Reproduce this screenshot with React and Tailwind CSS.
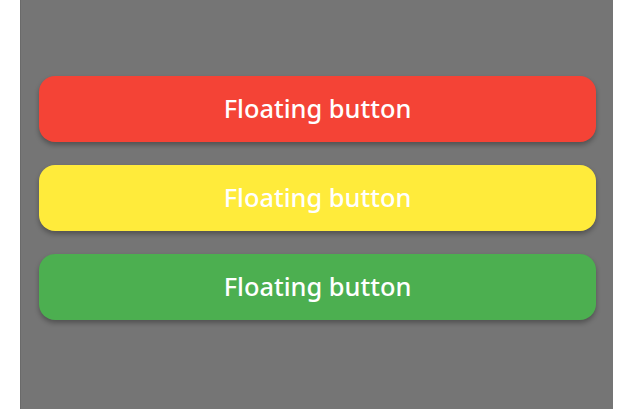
export default function App() {
  const buttons = [
    { label: "Floating button", color: "bg-[#f44336]" },
    { label: "Floating button", color: "bg-[#ffeb3b]" },
    { label: "Floating button", color: "bg-[#4caf50]" },
  ];
  return (
    <div className="w-[640px] h-[409px] bg-white flex">
      <div className="ml-[20px] w-[593px] h-full bg-[#757575] border-l border-[#6a6a6a] pl-[18px] pr-[17px] pt-[76px] flex flex-col gap-[23px]">
        {buttons.map((b, i) => (
          <button
            key={i}
            className={`${b.color} h-[66px] w-full rounded-[16px] shadow-[0_3px_5px_rgba(0,0,0,0.3)] text-white text-[25.4px] font-medium flex items-center justify-center pb-[2px]`}
            style={{ fontFamily: '"Noto Sans", sans-serif' }}
          >
            {b.label}
          </button>
        ))}
      </div>
    </div>
  );
}
